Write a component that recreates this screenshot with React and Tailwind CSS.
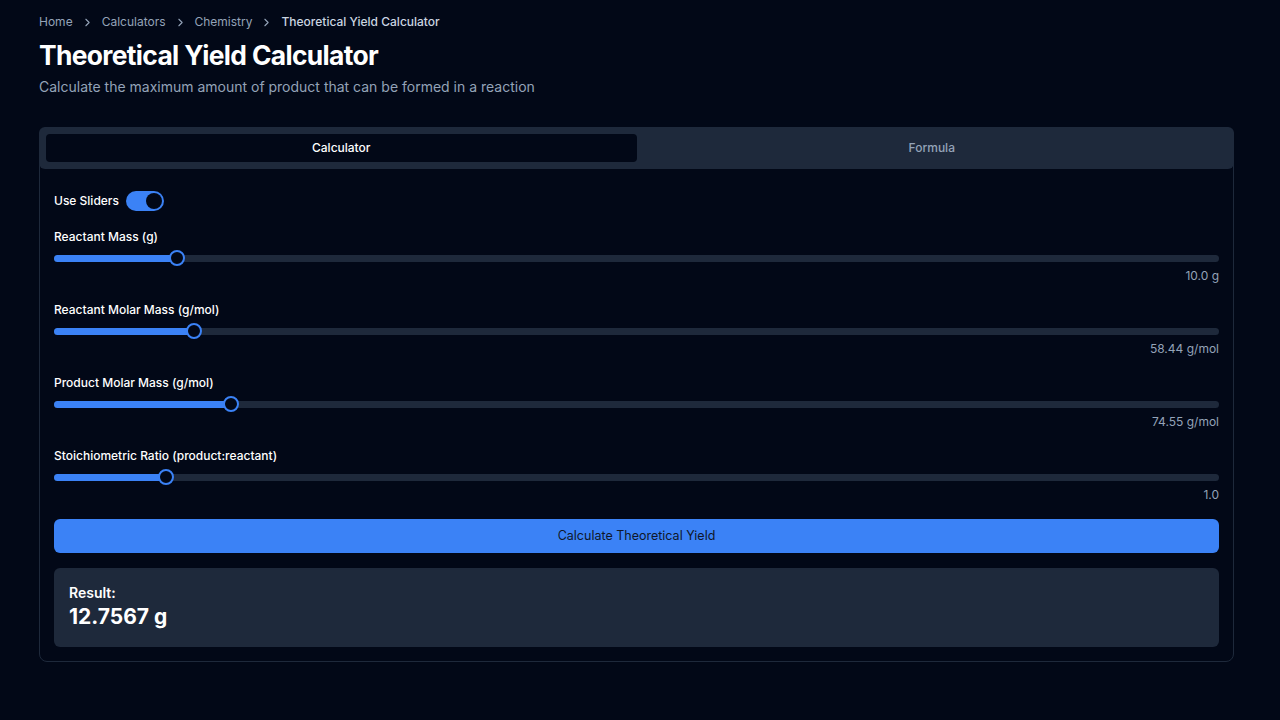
import { useState } from "react";
import * as Slider from "@radix-ui/react-slider";
import { ChevronRight } from "lucide-react";

const fields = [
  { key: "mass", label: "Reactant Mass (g)", min: 0, max: 100, step: 0.1, value: 10, unit: "g", digits: 1 },
  { key: "rmm", label: "Reactant Molar Mass (g/mol)", min: 1, max: 500, step: 0.01, value: 58.44, unit: "g/mol", digits: 2 },
  { key: "pmm", label: "Product Molar Mass (g/mol)", min: 1, max: 500, step: 0.01, value: 74.55, unit: "g/mol", digits: 2 },
  { key: "ratio", label: "Stoichiometric Ratio (product:reactant)", min: 0.1, max: 10, step: 0.1, value: 1, unit: "", digits: 1 },
];

const RangeField = ({ field, value, onChange }) => (
  <div className="flex flex-col">
    <label className="text-xs leading-5 font-medium text-white">{field.label}</label>
    <Slider.Root
      className="relative flex items-center w-full h-4 mt-[3px] select-none touch-none"
      min={field.min}
      max={field.max}
      step={field.step}
      value={[value]}
      onValueChange={(v) => onChange(v[0])}
    >
      <Slider.Track className="relative h-[7px] grow rounded-full bg-[#1e293b] overflow-hidden">
        <Slider.Range className="absolute h-full bg-[#3b82f6]" />
      </Slider.Track>
      <Slider.Thumb className="block h-4 w-4 rounded-full border-2 border-[#3b82f6] bg-[#020817] outline-none" />
    </Slider.Root>
    <div className="text-right text-xs leading-5 text-[#94a3b8]">
      {value.toFixed(field.digits)}
      {field.unit ? ` ${field.unit}` : ""}
    </div>
  </div>
);

export default function App() {
  const [tab, setTab] = useState("calculator");
  const [useSliders, setUseSliders] = useState(true);
  const [values, setValues] = useState(
    Object.fromEntries(fields.map((f) => [f.key, f.value]))
  );

  return (
    <div
      className="min-h-screen bg-[#020817] text-white pl-[39px] pr-[46px] pt-3"
      style={{ fontFamily: "Inter, 'Noto Sans', sans-serif" }}
    >
      {/* breadcrumb */}
      <nav className="flex items-center gap-2 text-xs leading-5 text-[#94a3b8]">
        <span>Home</span>
        <ChevronRight size={13} />
        <span>Calculators</span>
        <ChevronRight size={13} />
        <span>Chemistry</span>
        <ChevronRight size={13} />
        <span className="font-medium text-[#cbd5e1]">Theoretical Yield Calculator</span>
      </nav>

      <h1 className="mt-[7px] text-[26.4px] leading-[32px] font-bold tracking-tight">
        Theoretical Yield Calculator
      </h1>
      <p className="mt-1.5 text-sm leading-5 text-[#94a3b8]">
        Calculate the maximum amount of product that can be formed in a reaction
      </p>

      <div className="mt-[30px] rounded-lg border border-[#1e293b]">
        <div className="grid grid-cols-2 h-[42px] p-[7px] rounded-md bg-[#1e293b] -mx-px -mt-px">
          <button
            onClick={() => setTab("calculator")}
            className={`rounded text-xs font-medium ${
              tab === "calculator" ? "bg-[#020817] text-white" : "text-[#94a3b8]"
            }`}
          >
            Calculator
          </button>
          <button
            onClick={() => setTab("formula")}
            className={`rounded text-xs font-medium ${
              tab === "formula" ? "bg-[#020817] text-white" : "text-[#94a3b8]"
            }`}
          >
            Formula
          </button>
        </div>

        <div className="px-[14px] pt-[22px] pb-[14px] flex flex-col">
          <div className="flex items-center gap-[7px] h-5">
            <span className="text-xs font-medium">Use Sliders</span>
            <button
              onClick={() => setUseSliders(!useSliders)}
              className={`flex items-center w-[38px] h-5 rounded-full px-0.5 ${
                useSliders ? "bg-[#3b82f6] justify-end" : "bg-[#1e293b] justify-start"
              }`}
            >
              <span className="block w-4 h-4 rounded-full bg-[#020817]" />
            </button>
          </div>

          <div className="mt-4 flex flex-col gap-[14px]">
            {fields.map((f) => (
              <RangeField
                key={f.key}
                field={f}
                value={values[f.key]}
                onChange={(v) => setValues((prev) => ({ ...prev, [f.key]: v }))}
              />
            ))}
          </div>

          <button className="mt-[14px] h-[34px] rounded-md bg-[#3b82f6] text-[12.5px] text-[#0f172a]">
            Calculate Theoretical Yield
          </button>

          <div className="mt-[15px] rounded-md bg-[#1e293b] px-[15px] pt-[15px] pb-4">
            <div className="text-sm leading-5 font-semibold">Result:</div>
            <div className="text-[21px] leading-7 font-bold">12.7567 g</div>
          </div>
        </div>
      </div>
    </div>
  );
}
